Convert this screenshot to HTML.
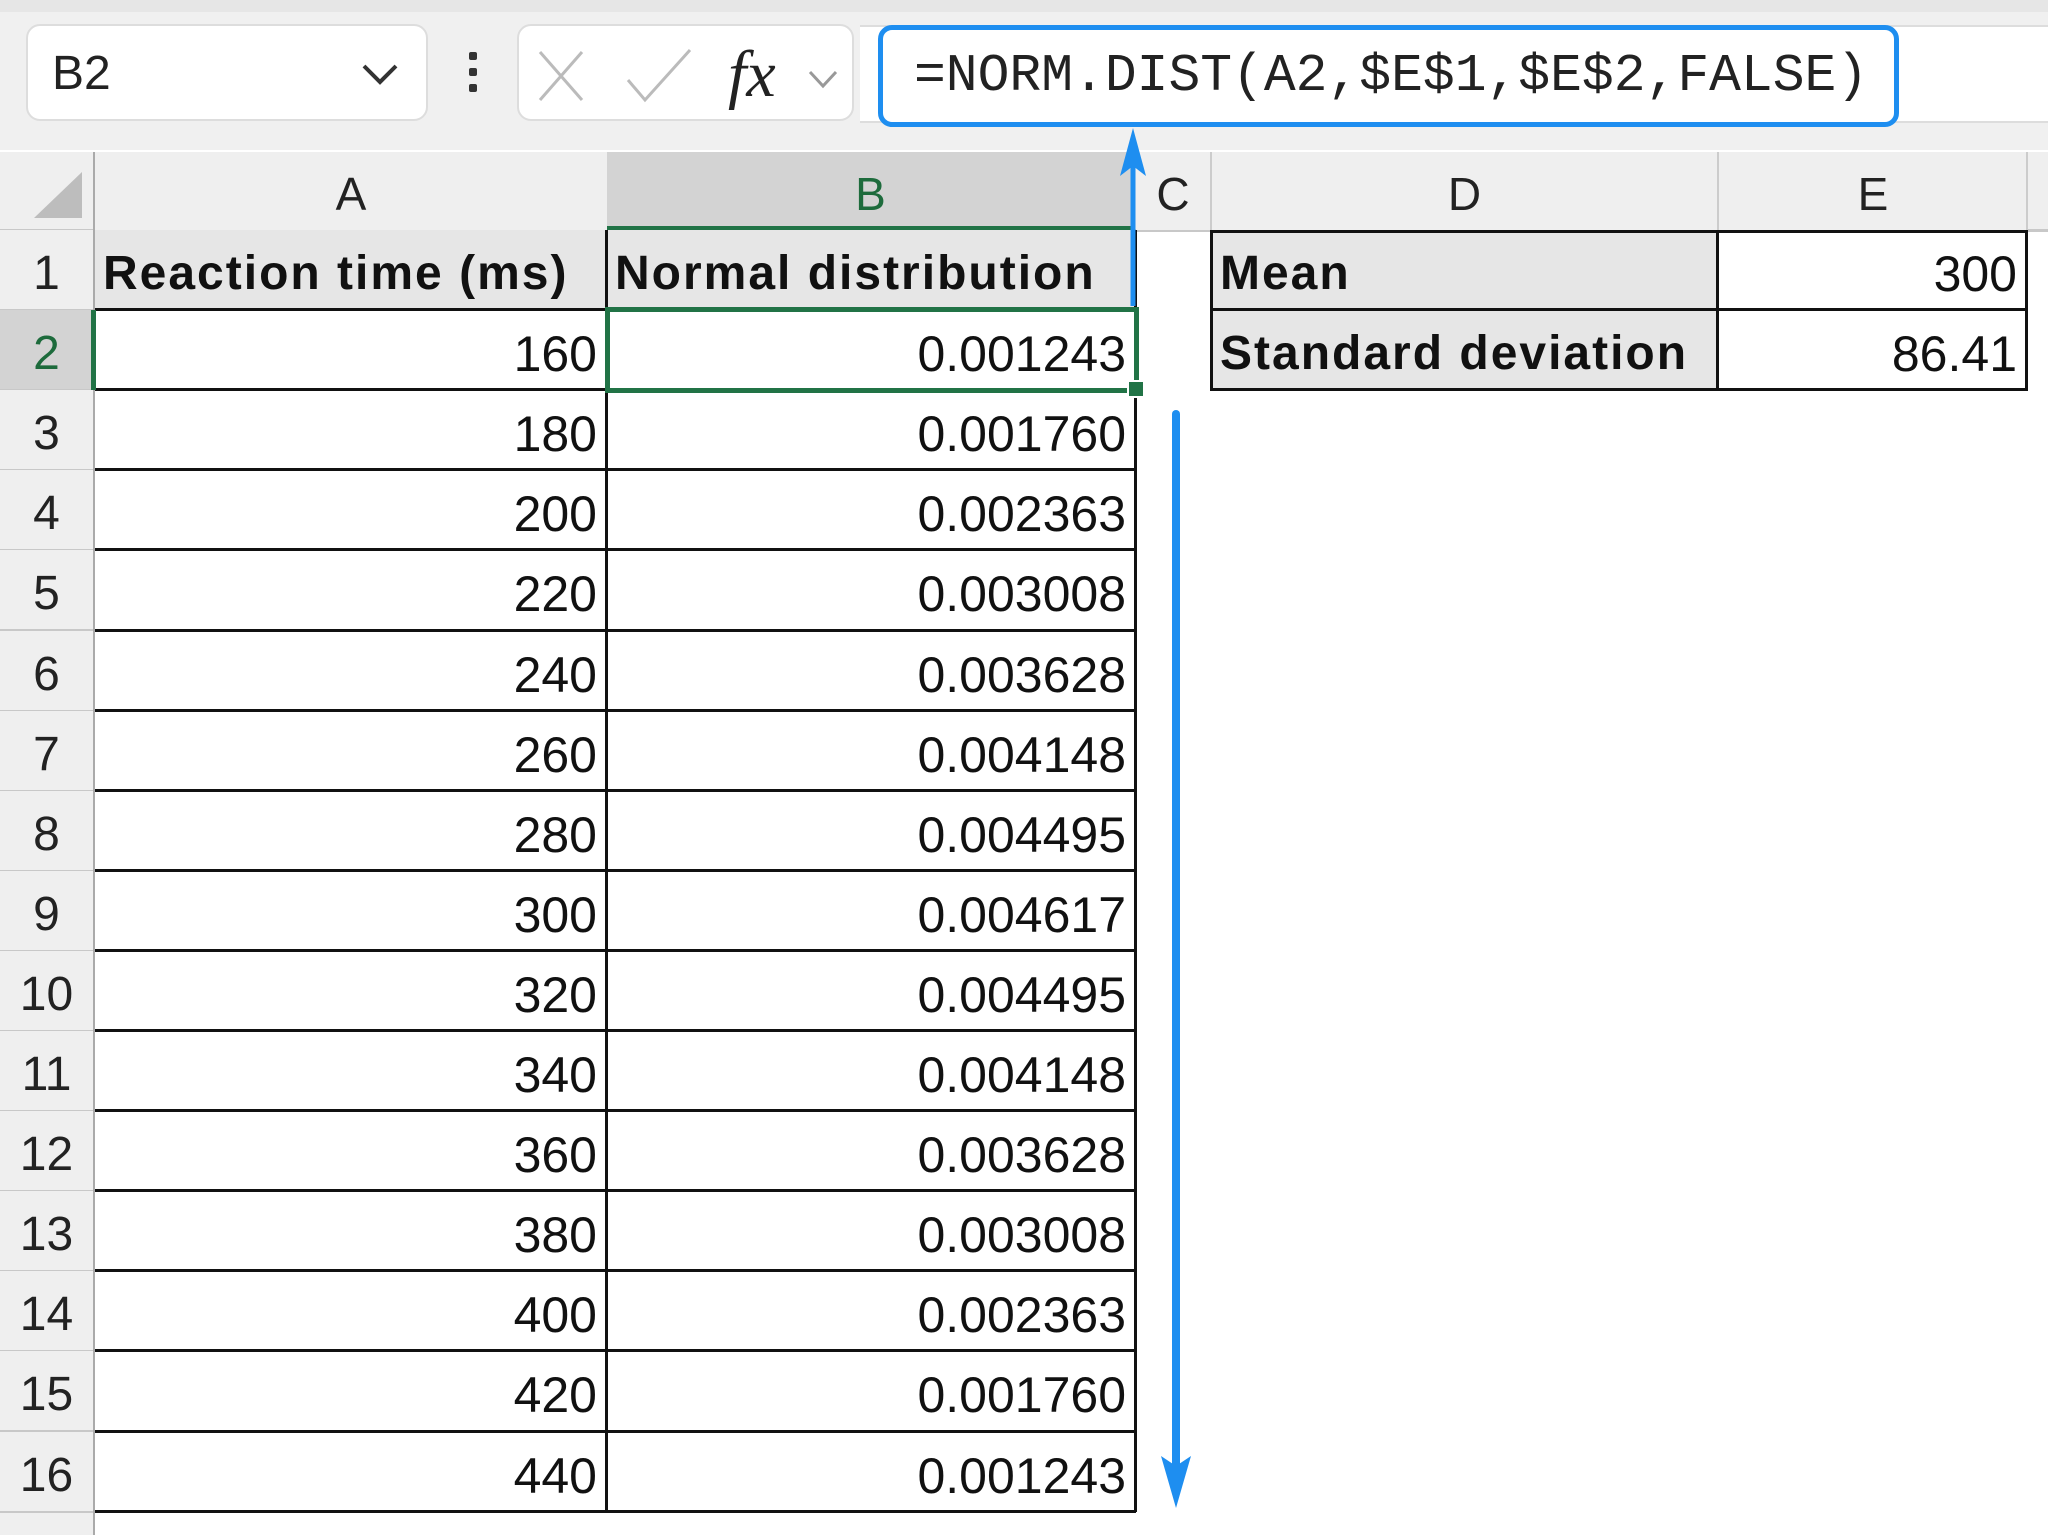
<!DOCTYPE html>
<html><head><meta charset="utf-8"><style>
*{margin:0;padding:0;box-sizing:border-box}
body{width:2048px;height:1535px;background:#fff;position:relative;overflow:hidden;font-family:"Liberation Sans",sans-serif;color:#111}
.a{position:absolute}
.hdr{position:absolute;background:#efefef;color:#222;font-size:46px;text-align:center;line-height:84px}
.cell{position:absolute;font-size:50px;line-height:88px;height:80px;white-space:nowrap;overflow:hidden}
.r{text-align:right;padding-right:10px}
.b{font-weight:bold;font-size:48px;letter-spacing:2px;padding-left:8px}
</style></head><body>
<div class="a" style="left:0;top:0;width:2048px;height:150px;background:#f0f0f0"></div>
<div class="a" style="left:0;top:0;width:2048px;height:12px;background:#e6e6e6"></div>
<div class="a" style="left:860px;top:25px;width:1188px;height:98px;background:#fff;border-top:2px solid #ddd;border-bottom:2px solid #ddd"></div>
<div class="a" style="left:26px;top:24px;width:402px;height:97px;background:#fff;border:2px solid #ddd;border-radius:14px"></div>
<div class="a" style="left:52px;top:42px;font-size:48px;line-height:64px;color:#222">B2</div>
<svg class="a" style="left:360px;top:58px" width="40" height="30"><path d="M4 8 L20 24 L36 8" stroke="#333" stroke-width="4" fill="none"/></svg>
<div class="a" style="left:469px;top:52px;width:8px;height:8px;background:#333;border-radius:2px"></div>
<div class="a" style="left:469px;top:68px;width:8px;height:8px;background:#333;border-radius:2px"></div>
<div class="a" style="left:469px;top:84px;width:8px;height:8px;background:#333;border-radius:2px"></div>
<div class="a" style="left:517px;top:24px;width:337px;height:97px;background:#fff;border:2px solid #ddd;border-radius:14px"></div>
<svg class="a" style="left:530px;top:40px" width="320" height="75">
<path d="M10 12 L52 60 M52 12 L10 60" stroke="#bbb" stroke-width="3" fill="none"/>
<path d="M98 40 L115 60 L160 10" stroke="#bbb" stroke-width="3" fill="none"/>
<text x="198" y="56" font-family="Liberation Serif" font-style="italic" font-size="66" fill="#222">fx</text>
<path d="M280 32 L293 46 L306 32" stroke="#999" stroke-width="3" fill="none"/>
</svg>
<div class="a" style="left:878px;top:25px;width:1021px;height:102px;background:#fff;border:5px solid #1e8ef0;border-radius:14px"></div>
<div class="a" style="left:914px;top:40px;font-family:'Liberation Mono',monospace;font-size:53px;line-height:72px;color:#222">=NORM.DIST(A2,$E$1,$E$2,FALSE)</div>

<div class="hdr" style="left:0;top:152px;width:2048px;height:80px;border-bottom:3px solid #c8c8c8"></div>
<svg class="a" style="left:30px;top:170px" width="55" height="50"><path d="M52 2 L52 48 L4 48 Z" fill="#bdbdbd"/></svg>
<div class="a" style="left:93px;top:152px;width:2px;height:1383px;background:#aaa"></div>
<div class="hdr" style="left:95px;top:152px;width:512px;height:78px">A</div>
<div class="hdr" style="left:607px;top:152px;width:527px;height:78px;background:#d3d3d3;color:#1d6b3c">B</div>
<div class="a" style="left:607px;top:226px;width:527px;height:5px;background:#217346"></div>
<div class="hdr" style="left:1136px;top:152px;width:74px;height:78px">C</div>
<div class="a" style="left:1210px;top:152px;width:2px;height:78px;background:#ccc"></div>
<div class="hdr" style="left:1212px;top:152px;width:505px;height:78px">D</div>
<div class="a" style="left:1717px;top:152px;width:2px;height:78px;background:#ccc"></div>
<div class="hdr" style="left:1719px;top:152px;width:308px;height:78px">E</div>
<div class="a" style="left:2026px;top:152px;width:2px;height:78px;background:#ccc"></div>

<div class="a" style="left:0;top:232px;width:93px;height:1303px;background:#efefef"></div>
<div id="cells"></div>

<script>
var A=[160,180,200,220,240,260,280,300,320,340,360,380,400,420,440];
var B=["0.001243","0.001760","0.002363","0.003008","0.003628","0.004148","0.004495","0.004617","0.004495","0.004148","0.003628","0.003008","0.002363","0.001760","0.001243"];
var h="";
for(var i=1;i<=16;i++){
 var t=230+(i-1)*80.1;
 var bg=i==2?"#d3d3d3":"#efefef", col=i==2?"#1d6b3c":"#222";
 h+='<div class="hdr" style="left:0;top:'+t+'px;width:93px;height:80px;line-height:88px;font-size:48px;background:'+bg+';color:'+col+'">'+i+'</div>';
 h+='<div class="a" style="left:0;top:'+(t+79)+'px;width:93px;height:2px;background:#c8c8c8"></div>';
}
h+='<div class="a" style="left:95px;top:230px;width:1041px;height:80px;background:#e6e6e6"></div>';
h+='<div class="cell b" style="left:95px;top:230px;width:512px">Reaction time (ms)</div>';
h+='<div class="cell b" style="left:607px;top:230px;width:527px">Normal distribution</div>';
for(var i=2;i<=16;i++){
 var t=230+(i-1)*80.1;
 h+='<div class="cell r" style="left:95px;top:'+t+'px;width:512px">'+A[i-2]+'</div>';
 h+='<div class="cell r" style="left:607px;top:'+t+'px;width:529px">'+B[i-2]+'</div>';
 h+='<div class="a" style="left:95px;top:'+(t-2)+'px;width:1041px;height:3px;background:#111"></div>';
}
h+='<div class="a" style="left:95px;top:1510px;width:1041px;height:3px;background:#111"></div>';
h+='<div class="a" style="left:605px;top:230px;width:3px;height:1282px;background:#111"></div>';
h+='<div class="a" style="left:1134px;top:230px;width:3px;height:1282px;background:#111"></div>';
h+='<div class="a" style="left:1212px;top:230px;width:505px;height:160px;background:#e6e6e6"></div>';
h+='<div class="cell b" style="left:1212px;top:230px;width:505px">Mean</div>';
h+='<div class="cell b" style="left:1212px;top:310px;width:505px">Standard deviation</div>';
h+='<div class="cell r" style="left:1717px;top:230px;width:310px">300</div>';
h+='<div class="cell r" style="left:1717px;top:310px;width:310px">86.41</div>';
h+='<div class="a" style="left:1211px;top:230px;width:817px;height:3px;background:#111"></div>';
h+='<div class="a" style="left:1211px;top:308px;width:817px;height:3px;background:#111"></div>';
h+='<div class="a" style="left:1211px;top:388px;width:817px;height:3px;background:#111"></div>';
h+='<div class="a" style="left:1210px;top:230px;width:3px;height:161px;background:#111"></div>';
h+='<div class="a" style="left:1716px;top:230px;width:3px;height:161px;background:#111"></div>';
h+='<div class="a" style="left:2025px;top:230px;width:3px;height:161px;background:#111"></div>';
h+='<div class="a" style="left:605px;top:307px;width:534px;height:86px;border:5px solid #217346"></div>';
h+='<div class="a" style="left:91px;top:310px;width:5px;height:80px;background:#217346"></div>';
h+='<div class="a" style="left:1127px;top:380px;width:18px;height:18px;background:#217346;border:2px solid #fff"></div>';
document.getElementById("cells").innerHTML=h;
</script>

<svg class="a" style="left:0;top:0" width="2048" height="1535">
<line x1="1133" y1="306" x2="1133" y2="160" stroke="#1e8ef0" stroke-width="5"/>
<path d="M1133 128 L1146 176 L1133 166 L1120 176 Z" fill="#1e8ef0"/>
<line x1="1176" y1="414" x2="1176" y2="1470" stroke="#1e8ef0" stroke-width="8" stroke-linecap="round"/>
<path d="M1176 1508 L1161 1456 L1176 1466 L1191 1456 Z" fill="#1e8ef0"/>
</svg>
</body></html>
